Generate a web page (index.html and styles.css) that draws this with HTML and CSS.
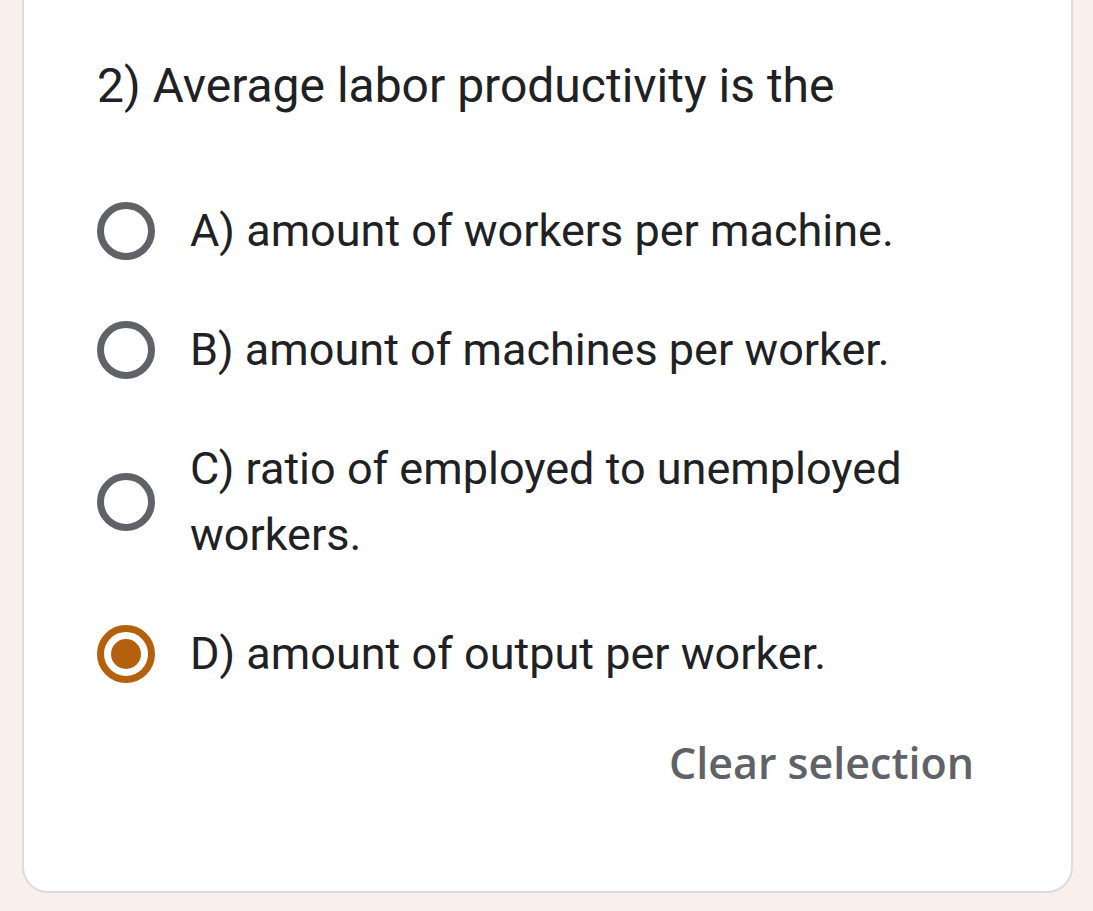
FILE: index.html
```html
<!DOCTYPE html>
<html>
<head>
<meta charset="utf-8">
<link rel="stylesheet" href="styles.css">
</head>
<body>
<div class="card">
  <div class="title">2) Average labor productivity is the</div>
  <div class="options">
    <div class="option">
      <span class="radio"></span>
      <span class="label">A) amount of workers per machine.</span>
    </div>
    <div class="option">
      <span class="radio"></span>
      <span class="label">B) amount of machines per worker.</span>
    </div>
    <div class="option">
      <span class="radio"></span>
      <span class="label">C) ratio of employed to unemployed workers.</span>
    </div>
    <div class="option">
      <span class="radio checked"></span>
      <span class="label">D) amount of output per worker.</span>
    </div>
  </div>
  <div class="actions">
    <span class="clear">Clear selection</span>
  </div>
</div>
</body>
</html>
```
FILE: styles.css
```css
html, body {
  margin: 0;
  padding: 0;
}
body {
  background: #f9efeb;
  width: 1093px;
  height: 911px;
  overflow: hidden;
  font-family: Roboto, "Noto Sans", sans-serif;
}
.card {
  box-sizing: border-box;
  margin: -40px 0 0 22px;
  width: 1051px;
  height: 933px;
  background: #ffffff;
  border: 2px solid #dadce0;
  border-radius: 26px;
  padding: 92px 97px 0 73px;
}
.title {
  font-size: 48px;
  line-height: 64px;
  color: #202124;
}
.options {
  margin-top: 80px;
  display: flex;
  flex-direction: column;
  gap: 53px;
}
.option {
  display: flex;
  align-items: center;
}
.radio {
  flex: none;
  box-sizing: border-box;
  width: 58px;
  height: 58px;
  border: 7px solid #5f6368;
  border-radius: 50%;
  margin-right: 35px;
  display: flex;
  align-items: center;
  justify-content: center;
}
.radio.checked {
  border-color: #b4600d;
}
.radio.checked::after {
  content: "";
  width: 30px;
  height: 30px;
  border-radius: 50%;
  background: #b4600d;
}
.label {
  font-size: 45px;
  line-height: 66px;
  color: #202124;
  max-width: 760px;
}
.actions {
  display: flex;
  justify-content: flex-end;
  margin-top: 46px;
}
.clear {
  font-family: "Open Sans", Roboto, sans-serif;
  font-weight: 600;
  font-size: 43px;
  color: #5f6368;
  line-height: 60px;
}
```
